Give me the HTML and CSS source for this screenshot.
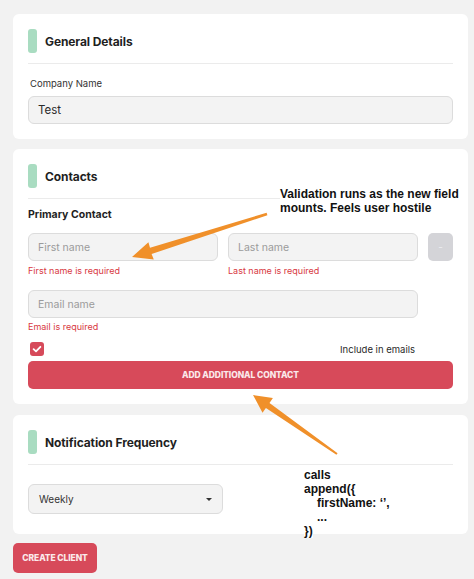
FILE: index.html
```html
<!DOCTYPE html>
<html lang="en">
<head>
<meta charset="utf-8">
<title>Create Client</title>
<link rel="stylesheet" href="styles.css">
</head>
<body>
<div class="page">
  <section class="card card-general">
    <div class="card-head"><span class="bar"></span><h2>General Details</h2></div>
    <div class="card-body">
      <label class="label">Company Name</label>
      <div class="input"><span class="value">Test</span></div>
    </div>
  </section>

  <section class="card card-contacts">
    <div class="card-head"><span class="bar"></span><h2>Contacts</h2></div>
    <div class="card-body">
      <h3 class="subhead">Primary Contact</h3>
      <div class="contact-grid">
        <div class="field">
          <div class="input"><span class="placeholder">First name</span></div>
          <div class="error">First name is required</div>
        </div>
        <div class="field">
          <div class="input"><span class="placeholder">Last name</span></div>
          <div class="error">Last name is required</div>
        </div>
        <div class="remove-btn"><span>-</span></div>
        <div class="field span2 email-field">
          <div class="input"><span class="placeholder">Email name</span></div>
          <div class="error">Email is required</div>
        </div>
        <div class="check-row span2">
          <span class="checkbox">
            <svg viewBox="0 0 14 14" width="14" height="14"><path d="M3.6 7.2 L6 9.4 L10.4 4.8" fill="none" stroke="#fff" stroke-width="1.8" stroke-linecap="round" stroke-linejoin="round"/></svg>
          </span>
          <span class="check-label">Include in emails</span>
        </div>
      </div>
      <button class="btn btn-wide">ADD ADDITIONAL CONTACT</button>
    </div>
  </section>

  <section class="card card-notify">
    <div class="card-head"><span class="bar"></span><h2>Notification Frequency</h2></div>
    <div class="card-body">
      <div class="select"><span class="value-sm">Weekly</span><span class="caret"></span></div>
    </div>
  </section>

  <div class="actions">
    <button class="btn btn-create">CREATE CLIENT</button>
  </div>

  <div class="note note-validation">Validation runs as the new field<br>mounts. Feels user hostile</div>
  <div class="note note-append">
    <span class="ln">calls</span>
    <span class="ln">append({</span>
    <span class="ln ind">firstName: ‘’,</span>
    <span class="ln ind">...</span>
    <span class="ln">})</span>
  </div>

  <svg class="arrows" viewBox="0 0 474 579" width="474" height="579">
    <polygon fill="#f0902a" points="267.4,215.2 151.6,254.1 153.8,259.5 132,257 148.4,242.3 150.0,247.7 266.6,212.8"/>
    <polygon fill="#f0902a" points="337.6,453.2 269.5,403.0 272.9,398.0 253,395 262.5,412.8 265.9,407.9 336.4,454.8"/>
  </svg>
</div>
</body>
</html>
```

FILE: styles.css
```css
* { box-sizing: border-box; }

html, body {
  margin: 0;
  padding: 0;
  background: #f2f2f2;
}

body {
  font-family: "Inter", "Open Sans", "Liberation Sans", sans-serif;
  color: #222;
}

.page {
  position: relative;
  width: 474px;
  height: 579px;
  padding: 14px 6px 0 13px;
}

.card {
  background: #fff;
  border-radius: 6px;
  padding: 15px;
  width: 455px;
}

.card-general { margin-bottom: 10px; }
.card-contacts { margin-bottom: 11px; }
.card-notify { padding-bottom: 20px; margin-bottom: 9px; }

.card-head {
  display: flex;
  align-items: center;
  gap: 8px;
  padding-bottom: 10px;
  border-bottom: 1px solid #ebebeb;
}

.bar {
  width: 9px;
  height: 24px;
  border-radius: 3px;
  background: #a9dcc1;
  flex: none;
}

.card-head h2 {
  margin: 0;
  font-size: 12px;
  font-weight: 700;
  color: #1f1f1f;
  letter-spacing: -0.1px;
}

.card-general .card-body { padding-top: 13px; }

.label {
  display: block;
  font-size: 9.5px;
  line-height: 14px;
  color: #333;
  padding-left: 2px;
  margin-bottom: 5px;
}

.input {
  height: 28px;
  border: 1px solid #dcdcdc;
  border-radius: 6px;
  background: #f3f3f3;
  display: flex;
  align-items: center;
  padding-left: 9px;
}

.value {
  font-size: 11.5px;
  color: #2a2a2a;
}

.placeholder {
  font-size: 10.5px;
  color: #9b9b9b;
}

.card-contacts .card-body { padding-top: 8px; }

.subhead {
  margin: 0 0 10px;
  font-size: 10.5px;
  line-height: 16px;
  font-weight: 700;
  color: #1f1f1f;
}

.contact-grid {
  display: grid;
  grid-template-columns: 1fr 1fr 25px;
  column-gap: 10px;
}

.span2 { grid-column: 1 / span 2; }

.error {
  font-size: 9px;
  line-height: 14px;
  color: #d8393f;
  margin-top: 3px;
}

.email-field { margin-top: 12px; }
.email-field .error { margin-top: 2px; }

.remove-btn {
  height: 28px;
  border-radius: 5px;
  background: #d4d4d8;
  display: flex;
  align-items: center;
  justify-content: center;
  color: #ededf0;
  font-size: 10px;
}

.check-row {
  display: flex;
  align-items: center;
  justify-content: space-between;
  margin-top: 8px;
  padding: 0 3px 0 2px;
  height: 14px;
}

.checkbox {
  width: 14px;
  height: 14px;
  border-radius: 3px;
  background: #d64a5a;
  display: block;
}

.checkbox svg { display: block; }

.check-label {
  font-size: 9.5px;
  color: #2a2a2a;
}

.btn {
  border: none;
  color: #fff;
  font-family: inherit;
  font-weight: 800;
  font-size: 8.5px;
  background: #d74a5a;
  border-radius: 5px;
  cursor: pointer;
  letter-spacing: -0.1px;
}

.btn-wide {
  display: block;
  width: 100%;
  height: 28px;
  margin-top: 5px;
  color: #fbe9eb;
}

.card-notify .card-body { padding-top: 19px; }

.select {
  width: 195px;
  height: 30px;
  border: 1px solid #dcdcdc;
  border-radius: 6px;
  background: #f3f3f3;
  display: flex;
  align-items: center;
  justify-content: space-between;
  padding: 0 10px 0 10px;
}

.value-sm {
  font-size: 10px;
  color: #333;
}

.caret {
  width: 0;
  height: 0;
  border-left: 3px solid transparent;
  border-right: 3px solid transparent;
  border-top: 3px solid #333;
}

.actions { display: flex; }

.btn-create {
  width: 84px;
  height: 30px;
  color: #fbe9eb;
}

.note {
  position: absolute;
  font-family: "Liberation Sans", Arial, sans-serif;
  font-weight: 700;
  font-size: 12px;
  line-height: 14px;
  color: #111;
}

.note-validation {
  left: 280px;
  top: 187px;
  background: #fff;
}

.note-append {
  left: 304px;
  top: 468px;
}

.note-append .ln {
  display: block;
  width: fit-content;
  background: #fff;
}

.note-append .ind { padding-left: 13px; }

.arrows {
  position: absolute;
  left: 0;
  top: 0;
  pointer-events: none;
}
```
